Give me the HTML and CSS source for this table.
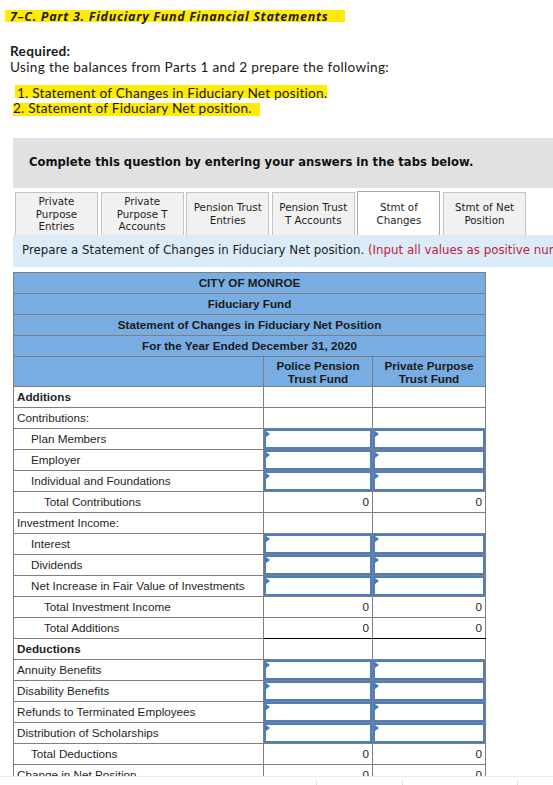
FILE: index.html
```html
<!DOCTYPE html>
<html lang="en">
<head>
<meta charset="utf-8">
<title>7-C. Part 3. Fiduciary Fund Financial Statements</title>
<link rel="stylesheet" href="styles.css">
</head>
<body>
<div class="page">
  <div class="intro">
    <h1 class="title"><span class="mark">7–C. Part 3. Fiduciary Fund Financial Statements</span></h1>
    <p class="req-head">Required:</p>
    <p class="req-text">Using the balances from Parts 1 and 2 prepare the following:</p>
    <ol class="tasks">
      <li class="task t1"><span class="mark1">1. Statement of Changes in Fiduciary Net position.</span></li>
      <li class="task t2"><span class="mark2">2. Statement of Fiduciary Net position.</span></li>
    </ol>
  </div>

  <div class="work">
    <div class="instr">Complete this question by entering your answers in the tabs below.</div>

    <div class="tabs">
      <div class="tab">Private<br>Purpose<br>Entries</div>
      <div class="tab">Private<br>Purpose T<br>Accounts</div>
      <div class="tab">Pension Trust<br>Entries</div>
      <div class="tab">Pension Trust<br>T Accounts</div>
      <div class="tab active">Stmt of<br>Changes</div>
      <div class="tab">Stmt of Net<br>Position</div>
    </div>

    <div class="prompt">Prepare a Statement of Changes in Fiduciary Net position. <span class="note">(Input all values as positive numbers.)</span></div>

    <table class="stmt">
      <colgroup>
        <col class="c-label">
        <col class="c-val1">
        <col class="c-val2">
      </colgroup>
      <thead>
        <tr class="hrow"><th colspan="3">CITY OF MONROE</th></tr>
        <tr class="hrow"><th colspan="3">Fiduciary Fund</th></tr>
        <tr class="hrow"><th colspan="3">Statement of Changes in Fiduciary Net Position</th></tr>
        <tr class="hrow"><th colspan="3">For the Year Ended December 31, 2020</th></tr>
        <tr class="colhead"><th></th><th>Police Pension<br>Trust Fund</th><th>Private Purpose<br>Trust Fund</th></tr>
      </thead>
      <tbody>
        <tr><td class="lbl bold">Additions</td><td></td><td></td></tr>
        <tr><td class="lbl">Contributions:</td><td></td><td></td></tr>
        <tr><td class="lbl i1">Plan Members</td><td class="in"><div class="field"></div></td><td class="in"><div class="field"></div></td></tr>
        <tr><td class="lbl i1">Employer</td><td class="in"><div class="field"></div></td><td class="in"><div class="field"></div></td></tr>
        <tr><td class="lbl i1">Individual and Foundations</td><td class="in"><div class="field"></div></td><td class="in"><div class="field"></div></td></tr>
        <tr><td class="lbl i2">Total Contributions</td><td class="tot">0</td><td class="tot">0</td></tr>
        <tr><td class="lbl">Investment Income:</td><td></td><td></td></tr>
        <tr><td class="lbl i1">Interest</td><td class="in"><div class="field"></div></td><td class="in"><div class="field"></div></td></tr>
        <tr><td class="lbl i1">Dividends</td><td class="in"><div class="field"></div></td><td class="in"><div class="field"></div></td></tr>
        <tr><td class="lbl i1">Net Increase in Fair Value of Investments</td><td class="in"><div class="field"></div></td><td class="in"><div class="field"></div></td></tr>
        <tr><td class="lbl i2">Total Investment Income</td><td class="tot">0</td><td class="tot">0</td></tr>
        <tr><td class="lbl i2">Total Additions</td><td class="tot grand">0</td><td class="tot grand">0</td></tr>
        <tr><td class="lbl bold">Deductions</td><td></td><td></td></tr>
        <tr><td class="lbl">Annuity Benefits</td><td class="in"><div class="field"></div></td><td class="in"><div class="field"></div></td></tr>
        <tr><td class="lbl">Disability Benefits</td><td class="in"><div class="field"></div></td><td class="in"><div class="field"></div></td></tr>
        <tr><td class="lbl">Refunds to Terminated Employees</td><td class="in"><div class="field"></div></td><td class="in"><div class="field"></div></td></tr>
        <tr><td class="lbl">Distribution of Scholarships</td><td class="in"><div class="field"></div></td><td class="in"><div class="field"></div></td></tr>
        <tr><td class="lbl i1">Total Deductions</td><td class="tot">0</td><td class="tot">0</td></tr>
        <tr><td class="lbl">Change in Net Position</td><td class="tot">0</td><td class="tot">0</td></tr>
        <tr><td class="lbl">Net Position, January 1, 2020</td><td class="in"><div class="field"></div></td><td class="in"><div class="field"></div></td></tr>
      </tbody>
    </table>
  </div>
</div>

<div class="footer-bar">
  <span class="sep s1"></span>
  <span class="sep s2"></span>
  <span class="sep s3"></span>
</div>
</body>
</html>
```

FILE: styles.css
```css
html, body {
  margin: 0;
  padding: 0;
  background: #ffffff;
}

body {
  height: 785px;
  overflow: hidden;
  font-family: "Lato", "Liberation Sans", sans-serif;
  color: #1a1a1a;
}

.page {
  width: 553px;
}

/* ---------- intro ---------- */
.intro {
  padding-left: 10px;
}

.title {
  margin: 10px 0 0 -5px;
  font-family: "Open Sans", "Lato", sans-serif;
  font-size: 12.5px;
  line-height: 12px;
  font-weight: 700;
  font-style: italic;
  letter-spacing: 0.7px;
  color: #1a1a1a;
}

.title .mark {
  display: inline-block;
  background: #ffec00;
  padding: 0 17px 0 5px;
  height: 12px;
  line-height: 14px;
  white-space: nowrap;
}

.req-head {
  margin: 20px 0 0;
  font-size: 13.6px;
  line-height: 16px;
  font-weight: 700;
  letter-spacing: 0.3px;
}

.req-text {
  margin: 0;
  font-size: 13.6px;
  line-height: 16px;
  font-weight: 400;
  letter-spacing: 0.33px;
}

.tasks {
  list-style: none;
  margin: 11px 0 0;
  padding: 0;
  font-size: 13.6px;
  line-height: 15px;
  letter-spacing: 0.24px;
}

.task {
  white-space: nowrap;
}

.t1 { padding-left: 7px; }
.t2 { padding-left: 3px; }

.mark1 {
  background: linear-gradient(#ffec00, #ffec00) no-repeat;
  background-size: 100% 15px;
  background-position: 0 -2px;
  margin-left: -2px;
  padding-left: 2px;
}

.mark2 {
  background: linear-gradient(#ffec00, #ffec00) no-repeat;
  background-size: 100% 13px;
  background-position: 0 3px;
  padding-right: 8px;
}

/* ---------- work area ---------- */
.work {
  padding-left: 13px;
  margin-top: 22px;
}

.instr {
  height: 50px;
  box-sizing: border-box;
  padding: 17px 0 0 16px;
  background: #e1e1e1;
  font-family: "DejaVu Sans", Verdana, sans-serif;
  font-weight: 700;
  font-size: 11.6px;
  color: #111;
  white-space: nowrap;
}

.tabs {
  display: flex;
  gap: 2.6px;
  margin: 3px 0 0 2px;
  align-items: flex-end;
}

.tab {
  width: 83px;
  height: 43px;
  box-sizing: border-box;
  border: 1px solid #c4c4c4;
  border-bottom: none;
  background: #f1f1f1;
  display: flex;
  align-items: center;
  justify-content: center;
  text-align: center;
  font-family: "DejaVu Sans", Verdana, sans-serif;
  font-size: 10.3px;
  line-height: 12.7px;
  color: #1e1e1e;
}

.tab.active {
  height: 44px;
  background: #ffffff;
  border-color: #a9a9a9;
}

.prompt {
  height: 32px;
  box-sizing: border-box;
  padding: 8px 0 0 9px;
  background: #dcebf8;
  white-space: nowrap;
  overflow: hidden;
  font-family: "DejaVu Sans", Verdana, sans-serif;
  font-size: 11.8px;
  color: #1c1c1c;
}

.prompt .note {
  color: #c0203a;
}

/* ---------- statement table ---------- */
.stmt {
  margin-top: 5px;
  border-collapse: collapse;
  table-layout: fixed;
  width: 472px;
  font-family: "Liberation Sans", Arial, sans-serif;
  font-size: 11.7px;
  color: #1f1f1f;
}

.c-label { width: 250px; }
.c-val1 { width: 109px; }
.c-val2 { width: 113px; }

.stmt th,
.stmt td {
  border: 1px solid #7f7f7f;
  padding: 0;
  height: 20px;
}

.hrow th {
  background: #78ade3;
  font-weight: 700;
  text-align: center;
  line-height: 14px;
  color: #1a1a1a;
}

.colhead th {
  background: #78ade3;
  font-weight: 700;
  text-align: center;
  height: 29px;
  line-height: 13px;
  vertical-align: middle;
  padding-top: 0;
  color: #1a1a1a;
}

.lbl {
  padding-left: 3px !important;
  white-space: nowrap;
  line-height: 14px;
}

.lbl.i1 { padding-left: 17px !important; }
.lbl.i2 { padding-left: 30px !important; }
.lbl.bold { font-weight: 700; }

.in {
  position: relative;
}

.field {
  height: 20px;
  box-sizing: border-box;
  border: 2px solid #4d7fbe;
  margin: 0;
}

.in::before {
  content: "";
  position: absolute;
  left: 2px;
  top: 2px;
  width: 0;
  height: 0;
  border-left: 4px solid #3f78c9;
  border-top: 3px solid transparent;
  border-bottom: 3px solid transparent;
}

.tot {
  text-align: right;
  padding-right: 3px !important;
  border-top: 1px solid #000 !important;
  line-height: 14px;
}

.tot.grand {
  border-bottom: 1px solid #000 !important;
}

/* ---------- bottom bar ---------- */
.footer-bar {
  position: fixed;
  left: 0;
  right: 0;
  bottom: 0;
  height: 8px;
  background: #ffffff;
  border-top: 1px solid #ececec;
}

.sep {
  position: absolute;
  top: 3px;
  bottom: 0;
  width: 1px;
  background: #e0e0e0;
}

.s1 { left: 316px; }
.s2 { left: 402px; }
.s3 { left: 517px; }
```
